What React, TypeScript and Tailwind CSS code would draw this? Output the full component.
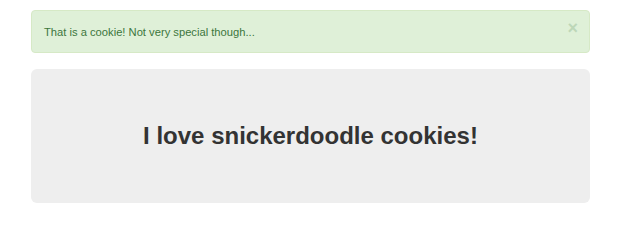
export default function App() {
  return (
    <div className="min-h-[227px] bg-white pt-[10px] font-['Liberation_Sans',Arial,sans-serif]">
      <div className="ml-[31px] w-[559px]">
        <div className="relative flex h-[43px] items-center rounded-[4px] border border-[#d6e9c6] bg-[#dff0d8] pl-[12px] pr-[30px] text-[11.2px] text-[#3c763d]">
          <span className="pt-[1px]">That is a cookie! Not very special though...</span>
          <span className="absolute right-[11px] top-[8px] text-[18px] font-bold leading-none text-[#3c763d] opacity-20">×</span>
        </div>
        <div className="mt-[16px] flex h-[134px] items-center justify-center rounded-[6px] bg-[#eeeeee]">
          <h1 className="text-[24px] font-bold text-[#333333]">I love snickerdoodle cookies!</h1>
        </div>
      </div>
    </div>
  );
}
